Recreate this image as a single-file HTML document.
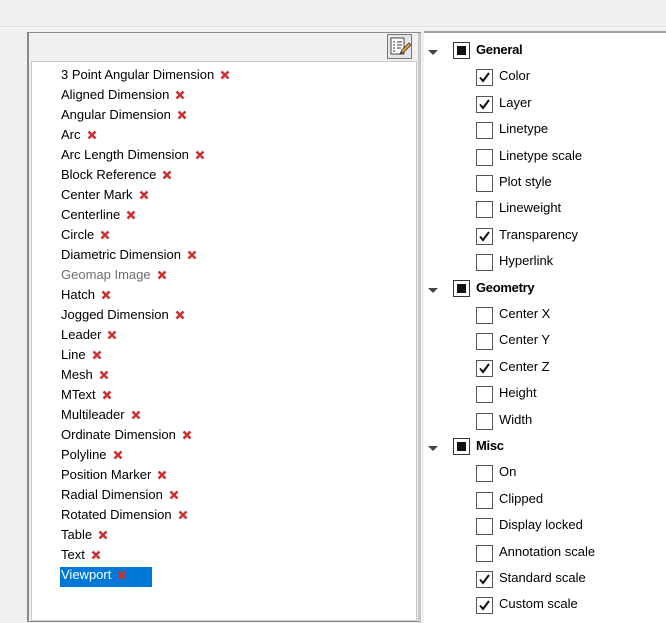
<!DOCTYPE html>
<html><head><meta charset="utf-8"><style>
*{margin:0;padding:0;box-sizing:border-box}
body{width:666px;height:618px;overflow:hidden;background:#f0f0f0;font-family:"Liberation Sans",Arial,sans-serif;font-size:13px;color:#000;position:relative}
.abs{position:absolute}
.item{position:absolute;left:61px;height:20px;line-height:20px;white-space:nowrap}
.x{display:inline-block;width:10px;height:10px;margin-left:6px;vertical-align:-1px}
.row{position:absolute;left:499px;height:20px;line-height:20px;white-space:nowrap}
.cb{position:absolute;left:476px;width:17px;height:17px;border:1px solid #555;background:#fff}
.grp{position:absolute;left:476px;font-weight:bold;height:20px;line-height:20px;letter-spacing:-0.3px}
.gsq{position:absolute;left:453px;width:17px;height:17px;border:1px solid #333;background:#fff}
.gsq:after{content:"";position:absolute;left:3px;top:3px;width:9px;height:9px;background:#111}
.arr{position:absolute;left:428px;width:0;height:0;border-left:5px solid transparent;border-right:5px solid transparent;border-top:5px solid #444}
</style></head><body>
<div class="abs" style="left:0;top:26px;width:666px;height:1px;background:#dcdcdc"></div>
<div class="abs" style="left:0;top:27px;width:666px;height:1px;background:#fafafa"></div>
<div class="abs" style="left:27px;top:32px;width:394px;height:590px;border:1px solid #8a8a8a;border-left:2px solid #8a8a8a;background:#f0f0f0"></div>
<div class="abs" style="left:31px;top:61px;width:386px;height:560px;background:#fff;border:1px solid #c8c8c8"></div>
<div class="abs" style="left:418px;top:33px;width:3px;height:590px;background:#c8c8c8"></div>
<div class="abs" style="left:387px;top:34px;width:25px;height:25px;border:1px solid #777;background:#e6e6e6">
<svg width="23" height="23" viewBox="0 0 23 23"><rect x="3" y="3" width="13" height="16" fill="#fff" stroke="#444"/><path d="M5 7h2M9 7h5M5 10h2M9 10h5M5 13h2M9 13h4M5 16h2" stroke="#333"/><path d="M12 19l2-4 7-7 2 2-7 7z" fill="#f0a030" stroke="#333" stroke-width=".8"/><path d="M12 19l1-2.5 1.5 1.5z" fill="#222"/></svg>
</div>
<div class="abs" style="left:60px;top:567px;width:92px;height:20px;background:#0078d7"></div>
<svg width="0" height="0" style="position:absolute"><defs><symbol id="x" viewBox="0 0 10 10"><path d="M1.5 1.5L8.5 8.5M8.5 1.5L1.5 8.5" stroke="#d03030" stroke-width="2.6"/></symbol></defs></svg>
<div id="l"></div>
<svg width="0" height="0" style="position:absolute"><defs><symbol id="c" viewBox="0 0 15 15"><path d="M3 7.5l3 3.5 6-8" fill="none" stroke="#111" stroke-width="2"/></symbol></defs></svg>
<div class="abs" style="left:424px;top:33px;width:242px;height:590px;background:#fff"></div>
<div class="abs" style="left:424px;top:31px;width:242px;height:2px;background:#a0a0a0"></div>
<div id="r"></div>
<script>
var items=["3 Point Angular Dimension","Aligned Dimension","Angular Dimension","Arc","Arc Length Dimension","Block Reference","Center Mark","Centerline","Circle","Diametric Dimension","Geomap Image","Hatch","Jogged Dimension","Leader","Line","Mesh","MText","Multileader","Ordinate Dimension","Polyline","Position Marker","Radial Dimension","Rotated Dimension","Table","Text","Viewport"];
var l="";
items.forEach(function(t,i){var st="top:"+(65+i*20)+"px";if(t=="Geomap Image")st+=";color:#6d6d6d";if(t=="Viewport")st+=";color:#fff";
l+='<div class="item" style="'+st+'">'+t+'<svg class="x"><use href="#x"/></svg></div>';});
document.getElementById("l").innerHTML=l;
var rows=[["g","General"],["c","Color"],["c","Layer"],["","Linetype"],["","Linetype scale"],["","Plot style"],["","Lineweight"],["c","Transparency"],["","Hyperlink"],["g","Geometry"],["","Center X"],["","Center Y"],["c","Center Z"],["","Height"],["","Width"],["g","Misc"],["","On"],["","Clipped"],["","Display locked"],["","Annotation scale"],["c","Standard scale"],["c","Custom scale"]];
var h="";
rows.forEach(function(r,i){var cy=Math.round(50+i*26.4);
if(r[0]=="g"){h+='<div class="arr" style="top:'+(cy)+'px"></div><div class="gsq" style="top:'+(cy-8)+'px"></div><div class="grp" style="top:'+(cy-10)+'px">'+r[1]+'</div>';}
else{h+='<div class="cb" style="top:'+(cy-7)+'px">'+(r[0]=="c"?'<svg width="15" height="15" style="display:block"><use href="#c"/></svg>':'')+'</div><div class="row" style="top:'+(cy-10)+'px">'+r[1]+'</div>';}
});
document.getElementById("r").innerHTML=h;
</script>
</body></html>
